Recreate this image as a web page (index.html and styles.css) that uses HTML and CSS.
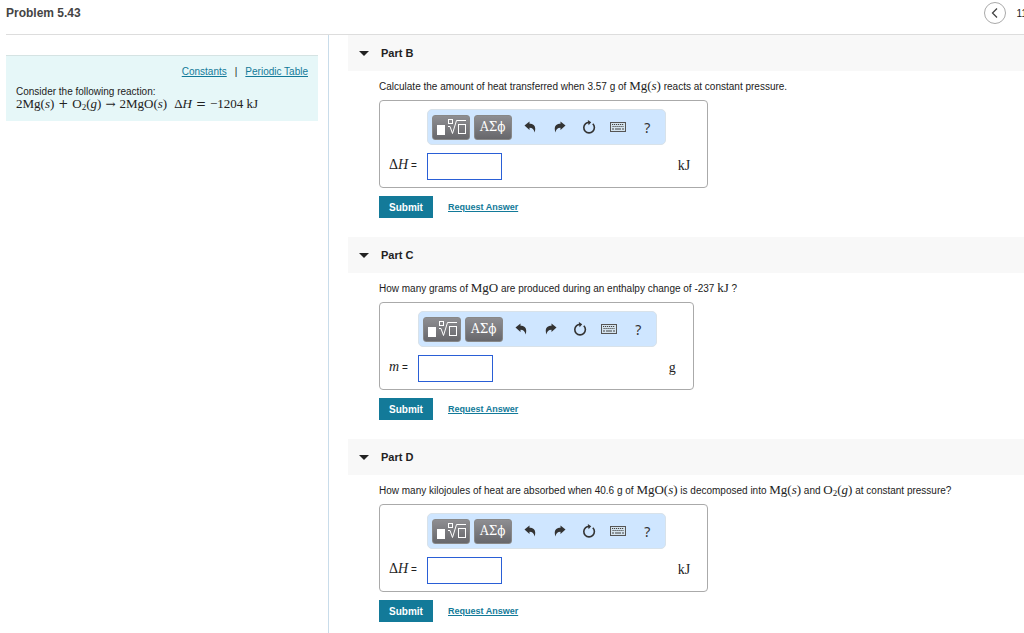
FILE: index.html
```
<!DOCTYPE html>
<html lang="en">
<head>
    <meta charset="UTF-8">
    <meta name="viewport" content="width=device-width, initial-scale=1.0">
    <title>Problem 5.43</title>
    <link rel="stylesheet" href="styles.css">
</head>
<body>
    <!-- shared toolbar icons -->
    <svg class="sprite" aria-hidden="true">
        <symbol id="icon-root" viewBox="0 0 30 18">
            <rect x="1" y="7" width="8" height="10" fill="#fff"/>
            <rect x="12.5" y="1.5" width="4" height="4" fill="none" stroke="#fff"/>
            <path d="M12 8.5h2l2.5 7 4-13H30" fill="none" stroke="#fff"/>
            <rect x="22.5" y="6.5" width="7" height="9" fill="none" stroke="#fff"/>
        </symbol>
        <symbol id="icon-undo" viewBox="0 0 12 12">
            <path d="M0.5 4.5L5.5 0.5V2.7C10 2.7 12.5 5.5 10.6 11.5C10 8.5 8.5 6.8 5.5 6.8V9Z" fill="#333"/>
        </symbol>
        <symbol id="icon-redo" viewBox="0 0 12 12">
            <path d="M11.5 4.5L6.5 0.5V2.7C2 2.7 -0.5 5.5 1.4 11.5C2 8.5 3.5 6.8 6.5 6.8V9Z" fill="#333"/>
        </symbol>
        <symbol id="icon-reset" viewBox="0 0 14 14">
            <path d="M10.8 3.8A5.3 5.3 0 1 1 3.6 3.6Q5 2.5 7 2.4" fill="none" stroke="#333" stroke-width="1.6"/>
            <path d="M5.8 0L9.2 2.2L6.6 5.2Z" fill="#333"/>
        </symbol>
        <symbol id="icon-keyboard" viewBox="0 0 16 10">
            <rect x="0.5" y="0.5" width="15" height="9" fill="#d4e3ee" stroke="#555"/>
            <path d="M2 2.5h12M2.5 4.5h11" stroke="#444" stroke-dasharray="1.2 0.8"/>
            <path d="M2 7h2M5 7h6M12 7h2" stroke="#444"/>
        </symbol>
    </svg>

    <header class="page-header">
        <h1>Problem 5.43</h1>
        <nav class="pager">
            <button class="prev-btn" aria-label="Previous">
                <svg viewBox="0 0 20 20"><path d="M12 5.5L7.5 10L12 14.5" fill="none" stroke="#444" stroke-width="1.3"/></svg>
            </button>
            <span>11</span>
        </nav>
    </header>

    <div class="columns">
        <aside class="sidebar">
            <div class="intro">
                <div class="intro-links">
                    <a href="#">Constants</a><span class="divider">|</span><a href="#">Periodic Table</a>
                </div>
                <p>Consider the following reaction:</p>
                <p class="equation math">2Mg(<i>s</i>)<span class="rel">+</span>O<sub>2</sub>(<i>g</i>)<span class="rel">→</span>2MgO(<i>s</i>)<span class="space"></span>Δ<i>H</i><span class="rel">=</span>−1204 kJ</p>
            </div>
        </aside>

        <main class="parts">
            <section class="part">
                <h2><span class="arrow"></span>Part B</h2>
                <div class="part-body">
                    <p class="question">Calculate the amount of heat transferred when 3.57 g of <span class="math">Mg(<i>s</i>)</span> reacts at constant pressure.</p>
                    <div class="answer-box">
                        <div class="toolbar">
                            <button class="dark-btn" aria-label="Templates"><svg class="root"><use href="#icon-root"/></svg></button>
                            <button class="dark-btn">ΑΣϕ</button>
                            <button class="tool-btn" aria-label="Undo"><svg class="arrow-icon"><use href="#icon-undo"/></svg></button>
                            <button class="tool-btn" aria-label="Redo"><svg class="arrow-icon"><use href="#icon-redo"/></svg></button>
                            <button class="tool-btn" aria-label="Reset"><svg class="reset"><use href="#icon-reset"/></svg></button>
                            <button class="tool-btn" aria-label="Keyboard"><svg class="keyboard"><use href="#icon-keyboard"/></svg></button>
                            <button class="tool-btn">?</button>
                        </div>
                        <label for="answer-b"><span class="math">Δ<i>H</i></span> =</label>
                        <input type="text" id="answer-b">
                        <span class="unit math">kJ</span>
                    </div>
                    <div class="actions">
                        <button class="submit-btn">Submit</button>
                        <a href="#">Request Answer</a>
                    </div>
                </div>
            </section>

            <section class="part">
                <h2><span class="arrow"></span>Part C</h2>
                <div class="part-body">
                    <p class="question">How many grams of <span class="math">MgO</span> are produced during an enthalpy change of -237 <span class="math">kJ</span> ?</p>
                    <div class="answer-box">
                        <div class="toolbar">
                            <button class="dark-btn" aria-label="Templates"><svg class="root"><use href="#icon-root"/></svg></button>
                            <button class="dark-btn">ΑΣϕ</button>
                            <button class="tool-btn" aria-label="Undo"><svg class="arrow-icon"><use href="#icon-undo"/></svg></button>
                            <button class="tool-btn" aria-label="Redo"><svg class="arrow-icon"><use href="#icon-redo"/></svg></button>
                            <button class="tool-btn" aria-label="Reset"><svg class="reset"><use href="#icon-reset"/></svg></button>
                            <button class="tool-btn" aria-label="Keyboard"><svg class="keyboard"><use href="#icon-keyboard"/></svg></button>
                            <button class="tool-btn">?</button>
                        </div>
                        <label for="answer-c"><i class="math">m</i> =</label>
                        <input type="text" id="answer-c">
                        <span class="unit math">g</span>
                    </div>
                    <div class="actions">
                        <button class="submit-btn">Submit</button>
                        <a href="#">Request Answer</a>
                    </div>
                </div>
            </section>

            <section class="part">
                <h2><span class="arrow"></span>Part D</h2>
                <div class="part-body">
                    <p class="question">How many kilojoules of heat are absorbed when 40.6 g of <span class="math">MgO(<i>s</i>)</span> is decomposed into <span class="math">Mg(<i>s</i>)</span> and <span class="math">O<sub>2</sub>(<i>g</i>)</span> at constant pressure?</p>
                    <div class="answer-box">
                        <div class="toolbar">
                            <button class="dark-btn" aria-label="Templates"><svg class="root"><use href="#icon-root"/></svg></button>
                            <button class="dark-btn">ΑΣϕ</button>
                            <button class="tool-btn" aria-label="Undo"><svg class="arrow-icon"><use href="#icon-undo"/></svg></button>
                            <button class="tool-btn" aria-label="Redo"><svg class="arrow-icon"><use href="#icon-redo"/></svg></button>
                            <button class="tool-btn" aria-label="Reset"><svg class="reset"><use href="#icon-reset"/></svg></button>
                            <button class="tool-btn" aria-label="Keyboard"><svg class="keyboard"><use href="#icon-keyboard"/></svg></button>
                            <button class="tool-btn">?</button>
                        </div>
                        <label for="answer-d"><span class="math">Δ<i>H</i></span> =</label>
                        <input type="text" id="answer-d">
                        <span class="unit math">kJ</span>
                    </div>
                    <div class="actions">
                        <button class="submit-btn">Submit</button>
                        <a href="#">Request Answer</a>
                    </div>
                </div>
            </section>
        </main>
    </div>
</body>
</html>
```

FILE: styles.css
```
* {
    box-sizing: border-box;
}
body {
    margin: 0;
    height: 100vh;
    display: flex;
    flex-direction: column;
    overflow: hidden;
    font-family: "Liberation Sans", Arial, sans-serif;
    font-size: 10px;
    color: #222;
    background: #fff;
}
h1, h2, p {
    margin: 0;
}
a {
    color: #137a99;
}
button {
    padding: 0;
    border: none;
    font-family: inherit;
    cursor: pointer;
}
svg {
    display: block;
}
.sprite {
    display: none;
}
.math {
    font-family: "Liberation Serif", "Times New Roman", serif;
    font-size: 13px;
    line-height: 12px;
}
.math sub {
    font-size: 9px;
    line-height: 0;
    vertical-align: -2px;
}

/* header */
.page-header {
    flex: none;
    display: flex;
    justify-content: space-between;
    height: 35px;
    margin-left: 6px;
    border-bottom: 1px solid #ddd;
}
.page-header h1 {
    font-size: 12px;
    line-height: 26px;
    color: #444;
}
.pager {
    display: flex;
    gap: 11px;
    margin-right: -3px;
    line-height: 28px;
}
.prev-btn {
    width: 22px;
    height: 22px;
    margin-top: 2px;
    border: 1px solid #aaa;
    border-radius: 50%;
    background: #fff;
}

/* two columns */
.columns {
    flex: 1;
    display: flex;
    min-height: 0;
}
.sidebar {
    flex: none;
    width: 329px;
    padding: 20px 10px 0 6px;
    border-right: 1px solid #c9dcea;
}
.intro {
    padding: 8px 10px 11px;
    border-top: 1px solid #d5e3e3;
    background: #e6f7f8;
}
.intro-links {
    margin-bottom: 6px;
    text-align: right;
    line-height: 16px;
}
.divider {
    margin: 0 8px;
}
.intro p {
    line-height: 12px;
}
.equation {
    white-space: nowrap;
}
.rel {
    margin: 0 4px;
    font-family: "DejaVu Serif", serif;
    font-size: 12px;
    line-height: 0;
}
.space {
    margin-left: 7px;
}

/* parts */
.parts {
    flex: 1;
    min-width: 0;
}
.part {
    margin: 0 0 19px 19px;
}
.part h2 {
    display: flex;
    align-items: center;
    gap: 12px;
    height: 36px;
    padding-left: 11px;
    font-size: 11px;
    background: #f8f8f8;
}
.arrow {
    border: 5px solid transparent;
    border-top-color: #222;
    border-bottom: none;
}
.part-body {
    padding-left: 31px;
}
.question {
    padding: 8px 0 5px;
    line-height: 16px;
}
.answer-box {
    display: inline-grid;
    grid-template-columns: auto 239px auto;
    align-items: center;
    gap: 7px 0;
    height: 88px;
    padding: 8px 17px 7px 9px;
    border: 1px solid #aaa;
    border-radius: 4px;
    vertical-align: top;
}
.answer-box .math {
    font-size: 14px;
}
.toolbar {
    grid-column: 2;
    display: flex;
    align-items: center;
    height: 36px;
    padding: 0 3px 0 4px;
    border: 1px solid #d8e2ea;
    border-radius: 5px;
    background: #cfe6ff;
}
.dark-btn {
    display: flex;
    align-items: center;
    justify-content: center;
    width: 38px;
    height: 25px;
    margin-right: 4px;
    border: 1px solid #888;
    border-radius: 3px;
    background: linear-gradient(#8e8e92, #67676b);
    color: #fff;
    font-family: "DejaVu Serif", serif;
    font-size: 12px;
}
.tool-btn {
    flex: 1;
    display: flex;
    align-items: center;
    justify-content: center;
    height: 24px;
    background: none;
    font-family: "Noto Sans", sans-serif;
    font-size: 14px;
    color: #333;
}
.root {
    width: 30px;
    height: 18px;
}
.arrow-icon {
    width: 12px;
    height: 12px;
}
.reset {
    width: 14px;
    height: 14px;
}
.keyboard {
    width: 16px;
    height: 10px;
}
.answer-box label {
    grid-column: 1;
    padding-right: 10px;
    line-height: 16px;
}
.answer-box input {
    width: 75px;
    height: 27px;
    border: 1px solid #2a5fd6;
    border-radius: 0;
    background: #fff;
}
.unit {
    padding-left: 12px;
}
.actions {
    display: flex;
    align-items: center;
    gap: 15px;
    margin-top: 8px;
    font-size: 9px;
    font-weight: bold;
}
.submit-btn {
    width: 54px;
    height: 22px;
    background: #137a99;
    color: #fff;
    font-size: 10px;
    font-weight: bold;
}
```
